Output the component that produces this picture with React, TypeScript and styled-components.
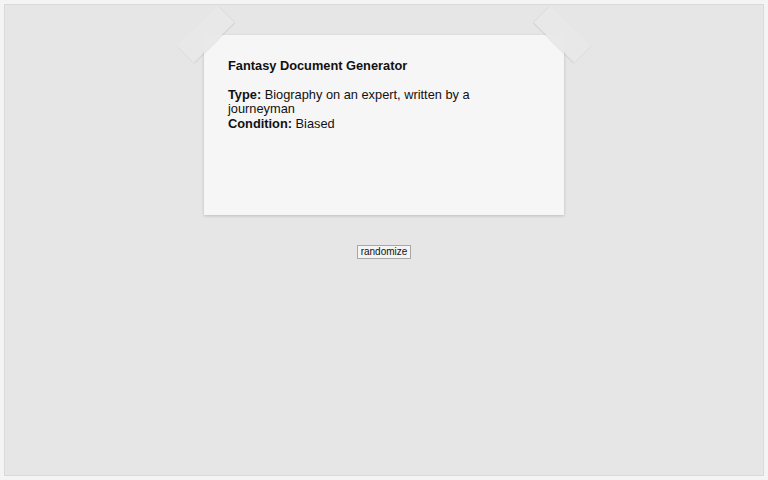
import styled, { createGlobalStyle } from 'styled-components';

const GlobalStyle = createGlobalStyle`
  html, body {
    margin: 0;
    padding: 0;
    background: #f4f4f4;
    font-family: "Liberation Sans", Arial, sans-serif;
  }
`;

const Page = styled.div`
  box-sizing: border-box;
  margin: 4px;
  height: 472px;
  background: #e6e6e6;
  border: 1px solid #dadada;
  display: flex;
  flex-direction: column;
  align-items: center;
  padding-top: 30px;
  overflow: hidden;
`;

const Card = styled.div`
  position: relative;
  box-sizing: border-box;
  width: 360px;
  height: 180px;
  padding: 24px 24px 22px;
  background: #f6f6f6;
  box-shadow: 0 1px 3px rgba(0, 0, 0, 0.18);
  font-size: 12.8px;
  line-height: 14.6px;
  color: #111;
`;

const Tape = styled.div<{ $side: 'left' | 'right' }>`
  position: absolute;
  top: -13px;
  ${({ $side }) => ($side === 'left' ? 'left: -27px;' : 'right: -27px;')}
  width: 57px;
  height: 24px;
  background: rgba(232, 232, 232, 0.95);
  box-shadow: 0 1px 2px rgba(0, 0, 0, 0.1);
  transform: rotate(${({ $side }) => ($side === 'left' ? '-45deg' : '45deg')});
`;

const Title = styled.div`
  font-weight: bold;
  margin-bottom: 14px;
`;

const Line = styled.div``;

const Label = styled.b``;

const Actions = styled.div`
  display: flex;
  margin-top: 30px;
`;

const Button = styled.button`
  font-family: "Liberation Sans", Arial, sans-serif;
  font-size: 10px;
  line-height: 12px;
  padding: 0 3px;
  margin: 0;
  color: #111;
  background: #f4f4f4;
  border: 1px solid #a8a8a8;
  border-radius: 0;
  cursor: pointer;
`;

const App = () => {
  return (
    <>
      <GlobalStyle />
      <Page>
        <Card>
          <Tape $side="left" />
          <Tape $side="right" />
          <Title>Fantasy Document Generator</Title>
          <Line>
            <Label>Type:</Label> Biography on an expert, written by a journeyman
          </Line>
          <Line>
            <Label>Condition:</Label> Biased
          </Line>
        </Card>
        <Actions>
          <Button>randomize</Button>
        </Actions>
      </Page>
    </>
  );
};

export default App;
